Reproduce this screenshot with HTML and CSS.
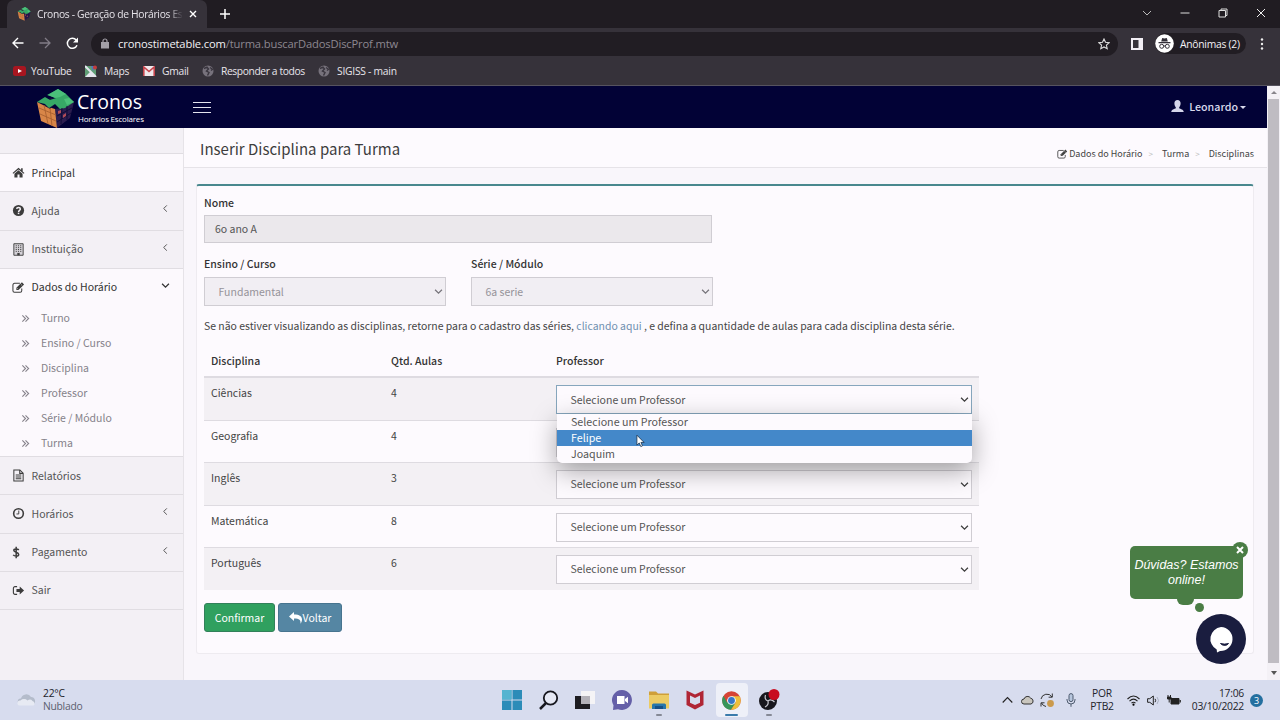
FILE: index.html
```html
<!DOCTYPE html>
<html lang="pt-br">
<head>
    <meta charset="UTF-8">
    <title>Cronos - Geração de Horários Escolares</title>
    <link rel="stylesheet" href="styles.css">
</head>
<body>

<!-- icons used more than once -->
<svg class="defs">
    <symbol id="chevron-down" viewBox="0 0 10 10"><path d="M1.2 3 5 6.800 8.800 3" fill="none" stroke="currentColor" stroke-width="1.4"/></symbol>
    <symbol id="chevron-left" viewBox="0 0 10 10"><path d="M6.5 1.5 3 5 6.5 8.500" fill="none" stroke="currentColor" stroke-width="1.1"/></symbol>
    <symbol id="double-right" viewBox="0 0 10 10"><path d="M1.500 1.500 5 5 1.500 8.500M5 1.500 8.500 5 5 8.500" fill="none" stroke="currentColor" stroke-width="1.200"/></symbol>
    <symbol id="edit" viewBox="0 0 14 12">
        <path d="M10.500 7.200V9.500a1.700 1.700 0 0 1-1.700 1.700H2.700A1.700 1.700 0 0 1 1 9.500V3.200a1.700 1.700 0 0 1 1.700-1.700H8.500" fill="none" stroke="currentColor" stroke-width="1.100"/>
        <path d="M4.700 8.700V6.400L10.700.4 13 2.700 7 8.700z" fill="currentColor"/><path d="m5.600 6.800 1 1M9.600 2.600l1.400 1.300" stroke="#fff" stroke-width=".6"/>
    </symbol>
    <symbol id="globe" viewBox="0 0 12 12"><circle cx="6" cy="6" r="5.500" fill="#77727c"/><path d="M2 3.500 5 2.200 6.500 4 4.500 6l2.500 1.500L5.500 10.500M8 2.500l2.500 1.700L9 5.500" fill="none" stroke="#39353e" stroke-width="1.400"/></symbol>
    <symbol id="cube" viewBox="0 0 38 40">
        <path d="M19 20 25 19 38 13 34 29 21 39z" fill="#2c1d50"/>
        <path d="M1 13 9 17 19 20 21 39 5 32z" fill="#d98648"/>
        <path d="M9 11 16 9 20 14 14 20 9 17z" fill="#17123a"/>
        <path d="M22 0 30 5 38 13 29 19 24 20 19 15 13 19 9 15 1 13 9 8 14 11 20 9 11 6z" fill="#37a866"/>
        <path d="M22 0 30 5 24 8 19 9 12 6zM28 10 33 9 38 13 31 16z" fill="#4bc07a"/>
        <path d="M3 19 20 26M4 25l16 7M8 16l4 19M14 19l2 18" fill="none" stroke="#a9602f" stroke-width=".9"/>
        <path d="m21 27 15-8M21 33l14-9M26 19l-1 16M31 17v14" stroke="#110d38"/><path d="m22 22 3-1v3l-3 1zM27 26l3-2v3l-3 2z" fill="#b04c58"/>
    </symbol>
</svg>

<div class="tabstrip">
    <div class="tab">
        <svg width="14" height="14"><use href="#cube"/></svg>
        <span class="tab-title">Cronos - Geração de Horários Es</span>
        <svg width="8" height="8" viewBox="0 0 8 8"><path d="m1 1 6 6M7 1 1 7" stroke="#fff" stroke-width="1.400"/></svg>
    </div>
    <svg class="new-tab" width="12" height="12" viewBox="0 0 12 12"><path d="M6 1v10M1 6h10" stroke="#fff" stroke-width="1.500"/></svg>
    <div class="window-buttons">
        <svg width="10" height="10" viewBox="0 0 10 10"><path d="M1 3l4 4 4-4" fill="none" stroke="#bbb"/></svg>
        <svg width="10" height="10" viewBox="0 0 10 10"><path d="M.5 5h9" stroke="#ddd"/></svg>
        <svg width="10" height="10" viewBox="0 0 10 10"><path d="M1 2.500h6.500V9H1zM3 2.500V1h6v6.500H7.500" fill="none" stroke="#ddd"/></svg>
        <svg width="10" height="10" viewBox="0 0 10 10"><path d="m1 1 8 8M9 1 1 9" stroke="#eee"/></svg>
    </div>
</div>

<div class="toolbar">
    <div class="nav-buttons">
        <svg width="12" height="12" viewBox="0 0 12 12"><path d="M11.500 6H1.500M6 1 1 6l5 5" fill="none" stroke="#fff" stroke-width="1.400"/></svg>
        <svg width="12" height="12" viewBox="0 0 12 12"><path d="M.5 6h10M6 1l5 5-5 5" fill="none" stroke="#817c86" stroke-width="1.300"/></svg>
        <svg width="13" height="13" viewBox="0 0 13 13"><path d="M11 8.200A5 5 0 1 1 10.300 3.200" fill="none" stroke="#fff" stroke-width="1.500"/><path d="M12 .5v5H7z" fill="#fff"/></svg>
    </div>
    <div class="address">
        <svg width="8" height="11" viewBox="0 0 8 11"><path d="M0 4h8v6.500H0z" fill="#a39fa7"/><path d="M2 4.500V3a2 2 0 0 1 4 0v1.500" fill="none" stroke="#a39fa7" stroke-width="1.200"/></svg>
        <span class="url">cronostimetable.com<span>/turma.buscarDadosDiscProf.mtw</span></span>
        <svg width="12" height="12" viewBox="0 0 12 12"><path d="m6 1 1.500 3.300 3.600.4-2.700 2.400.8 3.600L6 8.900l-3.200 1.800.8-3.600L.9 4.700l3.600-.4z" fill="none" stroke="#ddd" stroke-width="1.100"/></svg>
    </div>
    <svg class="side-panel" width="12" height="12" viewBox="0 0 12 12"><path d="M0 0h12v12H0zM2 2v8h5.500V2z" fill="#f2eff5" fill-rule="evenodd"/></svg>
    <div class="incognito">
        <svg width="19" height="19" viewBox="0 0 19 19"><circle cx="9.500" cy="9.500" r="9.300" fill="#fff"/><path d="m6.200 7.500 1-3.500 2.300.6 2.300-.6 1 3.500zM3.500 8h12v1.200h-12z" fill="#332f38"/><circle cx="6.700" cy="12.300" r="2" fill="none" stroke="#332f38"/><circle cx="12.300" cy="12.300" r="2" fill="none" stroke="#332f38"/><path d="M8.500 12h2" stroke="#332f38"/></svg>
        <span>Anônimas (2)</span>
    </div>
    <svg width="4" height="12" viewBox="0 0 4 12"><g fill="#eee"><circle cx="2" cy="1.500" r="1.200"/><circle cx="2" cy="6" r="1.200"/><circle cx="2" cy="10.500" r="1.200"/></g></svg>
</div>

<div class="bookmarks">
    <span class="bm-youtube"><svg width="13" height="10" viewBox="0 0 13 10"><rect width="13" height="10" rx="2.500" fill="#a81620"/><path d="m5 3 4 2-4 2z" fill="#fff"/></svg>YouTube</span>
    <span class="bm-maps"><svg width="12" height="12" viewBox="0 0 12 12"><path d="M0 1h11v11H0z" fill="#5f9d75"/><path d="m0 12 5.500-5.500L11 12z" fill="#e4e6ee"/><path d="m0 1 11 11" stroke="#e4e6ee" stroke-width="2"/><path d="M6 1h5L8 6z" fill="#5076bd"/><circle cx="10" cy="2.500" r="2" fill="#c23b3b"/></svg>Maps</span>
    <span class="bm-gmail"><svg width="12" height="10" viewBox="0 0 12 10"><path d="M0 0h12v10H0z" fill="#f0e8eb"/><path d="M.8 10V1L6 5.500 11.200 1v9" fill="none" stroke="#c4444c" stroke-width="1.600"/></svg>Gmail</span>
    <span class="bm-reply"><svg width="12" height="12"><use href="#globe"/></svg>Responder a todos</span>
    <span class="bm-sigiss"><svg width="12" height="12"><use href="#globe"/></svg>SIGISS - main</span>
</div>

<div class="viewport">
    <div class="page">
        <header class="navbar">
            <div class="brand">
                <svg width="38" height="40"><use href="#cube"/></svg>
                <div>
                    <div class="brand-name">Cronos</div>
                    <div class="brand-sub">Horários Escolares</div>
                </div>
            </div>
            <div class="burger"><i></i><i></i><i></i></div>
            <div class="user">
                <svg width="13" height="12" viewBox="0 0 13 12"><path d="M6.500 0C8.500 0 9.600 1.300 9.600 3.300c0 1.800-.6 3-1.400 3.900v1c.9.800 4.500 1 4.500 3.800H.3C.3 9.200 3.900 9 4.800 8.200v-1C4 6.300 3.400 5.100 3.400 3.300 3.400 1.300 4.500 0 6.500 0z" fill="#d5d6ea"/></svg>
                <span>Leonardo</span><i class="caret"></i>
            </div>
        </header>

        <div class="columns">
            <nav class="sidebar">
                <ul>
                    <li class="active"><svg class="icon" viewBox="0 0 14 14"><path d="M7 2 .6 7.500l.8.900L7 3.700l5.600 4.700.8-.9L11.500 5.800V2.500H9.800v1.900z"/><path d="M7 4.700 2.600 8.300V12.500h3.300V9.200h2.200v3.300h3.300V8.300z"/></svg>Principal</li>
                    <li><svg class="icon" viewBox="0 0 14 14"><circle cx="7" cy="7" r="6"/><path d="M5 5.300C5.200 3.300 9 3.400 9 5.500 9 6.900 7.100 6.900 7.100 8.500" fill="none" stroke="#f3f0f5" stroke-width="1.600"/><path d="M6.200 9.300h1.700v1.600H6.200z" fill="#f3f0f5"/></svg>Ajuda<svg class="arrow"><use href="#chevron-left"/></svg></li>
                    <li><svg class="icon" viewBox="0 0 14 14"><path d="M2 .8h10v12.400H2z" fill="#d5d2d8" stroke="currentColor"/><path d="M4 3h6M4 5h6M4 7h6M4 9h6" stroke="currentColor" stroke-dasharray="1.200 1.200"/><path d="M5.700 10.700h2.600v2.500H5.700z"/></svg>Instituição<svg class="arrow"><use href="#chevron-left"/></svg></li>
                    <li class="open"><svg class="icon"><use href="#edit"/></svg>Dados do Horário<svg class="arrow"><use href="#chevron-down"/></svg></li>
                    <li class="sub">
                        <ul>
                            <li><svg><use href="#double-right"/></svg>Turno</li>
                            <li><svg><use href="#double-right"/></svg>Ensino / Curso</li>
                            <li><svg><use href="#double-right"/></svg>Disciplina</li>
                            <li><svg><use href="#double-right"/></svg>Professor</li>
                            <li><svg><use href="#double-right"/></svg>Série / Módulo</li>
                            <li><svg><use href="#double-right"/></svg>Turma</li>
                        </ul>
                    </li>
                    <li><svg class="icon" viewBox="0 0 14 14"><path d="M2 1h6.500L12 4.500V13H2zM8.300 1v3.700H12M4 6.500h6M4 8.500h6M4 10.500h6" fill="none" stroke="currentColor" stroke-width="1.100"/></svg>Relatórios</li>
                    <li><svg class="icon" viewBox="0 0 14 14"><circle cx="7" cy="7" r="5.200" fill="none" stroke="currentColor" stroke-width="1.700"/><path d="M7.300 3.800v3.700H4.800" fill="none" stroke="currentColor"/></svg>Horários<svg class="arrow"><use href="#chevron-left"/></svg></li>
                    <li><svg class="icon" viewBox="0 0 14 14"><path d="M7.300 4.300C6.400 2.900 1.900 2.600 1.900 4.700 1.900 7.100 7.200 6.500 7.200 9.100 7.200 11.500 2.500 11.200 1.300 9.600M4.500.8v12.400" fill="none" stroke="currentColor" stroke-width="1.600"/></svg>Pagamento<svg class="arrow"><use href="#chevron-left"/></svg></li>
                    <li><svg class="icon" viewBox="0 0 14 14"><path d="M5.500 2.800H3.200A1.700 1.700 0 0 0 1.500 4.500v5A1.700 1.700 0 0 0 3.200 11.200h2.300" fill="none" stroke="currentColor" stroke-width="1.200"/><path d="M4.800 5.300h3.500V2.600L13 7l-4.700 4.400V8.700H4.800z"/></svg>Sair</li>
                </ul>
            </nav>

            <main>
                <div class="content-header">
                    <h1>Inserir Disciplina para Turma</h1>
                    <ol class="breadcrumb">
                        <li><svg width="11" height="10"><use href="#edit"/></svg>Dados do Horário</li>
                        <li>Turma</li>
                        <li>Disciplinas</li>
                    </ol>
                </div>

                <div class="box">
                    <div class="form-group">
                        <label>Nome</label>
                        <div class="form-control readonly">6o ano A</div>
                    </div>
                    <div class="form-row">
                        <div class="form-group">
                            <label>Ensino / Curso</label>
                            <div class="form-control select disabled">Fundamental<svg><use href="#chevron-down"/></svg></div>
                        </div>
                        <div class="form-group">
                            <label>Série / Módulo</label>
                            <div class="form-control select disabled">6a serie<svg><use href="#chevron-down"/></svg></div>
                        </div>
                    </div>
                    <p class="hint">Se não estiver visualizando as disciplinas, retorne para o cadastro das séries, <a>clicando aqui</a> , e defina a quantidade de aulas para cada disciplina desta série.</p>

                    <table>
                        <thead>
                            <tr><th class="col-disc">Disciplina</th><th class="col-qtd">Qtd. Aulas</th><th>Professor</th></tr>
                        </thead>
                        <tbody>
                            <tr>
                                <td>Ciências</td><td>4</td>
                                <td>
                                    <div class="form-control select focus">Selecione um Professor<svg><use href="#chevron-down"/></svg>
                                        <div class="options">
                                            <div>Selecione um Professor</div>
                                            <div class="hover">Felipe</div>
                                            <div>Joaquim</div>
                                            <svg class="cursor" viewBox="0 0 10 15"><path d="M1 1v11l2.600-2.300 1.700 4 1.900-.8-1.700-3.800H9z" fill="#fff" stroke="#1b3550" stroke-width=".9"/></svg>
                                        </div>
                                    </div>
                                </td>
                            </tr>
                            <tr><td>Geografia</td><td>4</td><td><div class="form-control select"></div></td></tr>
                            <tr><td>Inglês</td><td>3</td><td><div class="form-control select">Selecione um Professor<svg><use href="#chevron-down"/></svg></div></td></tr>
                            <tr><td>Matemática</td><td>8</td><td><div class="form-control select">Selecione um Professor<svg><use href="#chevron-down"/></svg></div></td></tr>
                            <tr><td>Português</td><td>6</td><td><div class="form-control select">Selecione um Professor<svg><use href="#chevron-down"/></svg></div></td></tr>
                        </tbody>
                    </table>

                    <div class="buttons">
                        <button class="btn btn-success">Confirmar</button>
                        <button class="btn btn-back"><svg width="13" height="12" viewBox="0 0 13 12"><path d="M0 4.500 5 0v2.600c5.500 0 8 2 8 5 0 1.500-.6 2.900-1.500 4.200C12 8.400 10.500 6.600 5 6.600V9z" fill="#fff"/></svg>Voltar</button>
                    </div>
                </div>
            </main>
        </div>
    </div>
    <div class="scrollbar"><i class="up"></i><div class="thumb"></div><i class="down"></i></div>

    <div class="chat">
        <div class="chat-bubble">Dúvidas? Estamos online!
            <svg class="chat-close" viewBox="0 0 16 16"><circle cx="8" cy="8" r="8" fill="#4a7d45"/><path d="m5 5 6 6M11 5l-6 6" stroke="#fff" stroke-width="2"/></svg>
        </div>
        <svg class="chat-button" viewBox="0 0 50 50"><circle cx="25" cy="25" r="25" fill="#1a1d3f"/><path d="M25 13a12 12 0 1 1-1 24l-3 1.500-.3-3A12 12 0 0 1 25 13z" fill="#fff"/><path d="M24.500 29.500c2 2.500 6.500 2.500 8 0q-4 1.200-8 0z" fill="#1a1d3f" stroke="#1a1d3f"/></svg>
    </div>
</div>

<div class="taskbar">
    <div class="weather">
        <svg width="20" height="14" viewBox="0 0 20 14"><path d="M3.500 11.500a3 3 0 0 1 .5-6 5.500 5.500 0 0 1 10-1.500 4 4 0 0 1 2 7.500z" fill="#b4bccb"/><path d="M2.500 12.500a2.500 2.500 0 0 1 1-5 5 5 0 0 1 7 0q3-2 5 .5a2.500 2.500 0 0 1 1 4.500z" fill="#e7eaf3"/></svg>
        <div><div>22°C</div><div class="muted">Nublado</div></div>
    </div>
    <div class="apps">
        <div><svg width="20" height="20" viewBox="0 0 20 20"><path d="M0 0h9.500v9.500H0zM10.500 0H20v9.500h-9.500zM0 10.500h9.500V20H0zM10.500 10.500H20V20h-9.500z" fill="#2c8cb8"/><path d="M0 0h9.500v9.500H0z" fill="#55b4d0"/></svg></div>
        <div><svg width="20" height="20" viewBox="0 0 20 20"><circle cx="11.500" cy="8" r="6.700" fill="#e6e9f5" stroke="#17181f" stroke-width="1.800"/><path d="m7 13-6 6" stroke="#17181f" stroke-width="2.500"/></svg></div>
        <div><svg width="20" height="20" viewBox="0 0 20 20"><path d="M6 1h14v13H6z" fill="#f5f4f6"/><path d="M0 6h15v13H0z" fill="#1d1c21"/><path d="M6 6h9v8H6z" fill="#b3b1b8"/></svg></div>
        <div><svg width="20" height="20" viewBox="0 0 20 20"><path d="M10 0a10 10 0 1 1-4 19.200L1 20l.5-4.800A10 10 0 0 1 10 0z" fill="#6560a8"/><path d="M5 6h7.500v8H5zM13 9l3-2.200v6.400L13 11z" fill="#fff"/></svg></div>
        <div class="running"><svg width="22" height="20" viewBox="0 0 22 20"><path d="M1 1.500h7l2 2h11V18H1z" fill="#cf9f39"/><path d="M1 5h20v13.500H1z" fill="#eccb64"/><path d="M4 19v-4q0-1.500 1.500-1.500h11q1.500 0 1.500 1.500v4z" fill="#2776ac"/><path d="M7 16h8v3H7z" fill="#164f87"/></svg></div>
        <div><svg width="20" height="20" viewBox="0 0 20 20"><path d="m1.500.5 8.500 4 8.500-4v14.500L10 19.500 1.500 15zM5 5.500v7.200l5 2.400 5-2.400V5.500L10 8z" fill="#b02635" fill-rule="evenodd"/></svg></div>
        <div class="running current"><svg width="19" height="19" viewBox="0 0 20 20"><circle cx="10" cy="10" r="9.800" fill="#d64436"/><path d="M1.500 5A9.800 9.800 0 0 0 9.500 19.800L14.500 12 10 10 5.500 12z" fill="#37955a"/><path d="M9.500 19.800A9.800 9.800 0 0 0 18.600 5.500H10L14.500 12z" fill="#edc03c"/><circle cx="10" cy="10" r="4.600" fill="#fff"/><circle cx="10" cy="10" r="3.600" fill="#3878c8"/></svg></div>
        <div class="running"><svg width="22" height="22" viewBox="0 0 22 22"><circle cx="10" cy="12" r="9" fill="#18171d"/><g fill="none" stroke="#c9c9d1" stroke-width="1.200"><path d="M7.500 6Q6 10.500 10 12M16.500 13Q13 9.500 10 12M7 18q4-2 3-6"/></g><circle cx="16" cy="5.500" r="5.500" fill="#c80d20"/></svg></div>
    </div>
    <div class="tray">
        <svg width="11" height="8" viewBox="0 0 11 8"><path d="m.7 6.500 4.800-5 4.800 5" fill="none" stroke="#222" stroke-width="1.100"/></svg>
        <svg class="tray-cloud" width="13" height="10" viewBox="0 0 13 10"><path d="M3 9a2.400 2.400 0 0 1 0-5 3.700 3.700 0 0 1 6.700-.8A3 3 0 0 1 10 9z" fill="#c9c6be" stroke="#333"/></svg>
        <svg class="tray-sync" width="15" height="15" viewBox="0 0 15 15"><path d="M1 6a6 6 0 0 1 11-2M12.300.5V4.200H8.600M6 13.500A6 6 0 0 1 1.500 10M1 13.500V9.800h3.500" fill="none" stroke="#333"/><circle cx="10.500" cy="10.500" r="3.400" fill="#cb9a4c"/></svg>
        <svg class="tray-mic" width="10" height="14" viewBox="0 0 10 14"><rect x="3" y=".6" width="4" height="8" rx="2" fill="#b7c6dd" stroke="#4d5a6e"/><path d="M1 6v1a4 4 0 0 0 8 0V6M5 11v2.800" fill="none" stroke="#4d5a6e"/></svg>
        <div class="lang">POR<br>PTB2</div>
        <svg class="tray-wifi" width="13" height="11" viewBox="0 0 13 11"><path d="M.5 4q6-6 12 0M2.500 6.200q4-4 8 0M4.500 8.200q2-2 4 0" fill="none" stroke="#222" stroke-width="1.100"/><circle cx="6.500" cy="9.700" r="1.100"/></svg>
        <svg class="tray-sound" width="13" height="11" viewBox="0 0 13 11"><path d="M.6 3.700h2.200L6.300 1v9L2.800 7.300H.6z" fill="none" stroke="#222"/><path d="M8 3.800q1.300 1.700 0 3.400" fill="none" stroke="#222"/><path d="M10 2q3 3.500 0 7" fill="none" stroke="#aab0c0"/></svg>
        <svg class="tray-battery" width="14" height="11" viewBox="0 0 14 11"><path d="M4 3.500h8v5.500H4z" fill="#222" stroke="#222"/><path d="M13.200 5v2.500" stroke="#222" stroke-width="1.300"/><path d="M1 0v2M3.500 0v2M.5 2h3.500v2H.5zM2.200 4v3.500" stroke="#222" fill="#222"/></svg>
        <div class="clock">17:06<br>03/10/2022</div>
        <span class="notif">3</span>
    </div>
</div>
</body>
</html>
```

FILE: styles.css
```css
* {
    box-sizing: border-box;
}
body {
    margin: 0;
    width: 1280px;
    height: 720px;
    overflow: hidden;
    display: flex;
    flex-direction: column;
    font-family: "Noto Sans CJK SC", sans-serif;
    font-size: 10.500px;
    line-height: 16px;
    color: #444;
    background: #f9f6fb;
}
svg {
    display: block;
    flex: none;
}
.defs {
    position: absolute;
    width: 0;
    height: 0;
}
ul, ol {
    list-style: none;
    margin: 0;
    padding: 0;
}

/* browser chrome */
.tabstrip, .toolbar, .bookmarks, .taskbar {
    font-family: "Open Sans", sans-serif;
    font-size: 10.300px;
    letter-spacing: -0.250px;
    display: flex;
    align-items: center;
}
.tabstrip {
    height: 28px;
    background: #201c22;
    color: #e5e2e8;
}
.tab {
    display: flex;
    align-items: center;
    width: 200px;
    height: 28px;
    margin-left: 7px;
    padding-left: 10px;
    border-radius: 7px 7px 0 0;
    background: #36323a;
}
.tab-title {
    width: 146px;
    margin: 0 6px 0 6px;
    white-space: nowrap;
    letter-spacing: -0.320px;
    -webkit-mask-image: linear-gradient(to right, #000 90%, transparent);
}
.new-tab {
    margin-left: 12px;
}
.window-buttons {
    display: flex;
    gap: 28px;
    margin-left: auto;
    margin-right: 14px;
    margin-top: -3px;
}
.toolbar {
    height: 31px;
    background: #36323a;
    padding-right: 16px;
}
.nav-buttons {
    display: flex;
    gap: 15px;
    width: 91px;
    padding-left: 12px;
}
.address {
    flex: 1;
    height: 24px;
    margin-right: 13px;
    padding: 0 8px 0 10px;
    border-radius: 12px;
    background: #211d23;
    display: flex;
    align-items: center;
}
.url {
    flex: 1;
    margin-left: 9px;
    font-size: 11.200px;
    letter-spacing: -0.150px;
    color: #f3f1f5;
}
.url span {
    color: #8d8891;
}
.incognito {
    display: flex;
    align-items: center;
    gap: 6px;
    width: 91px;
    height: 21px;
    margin: 0 14px 0 12px;
    border-radius: 11px;
    background: #211d23;
    color: #f3f1f5;
    white-space: nowrap;
}
.bookmarks {
    height: 27px;
    padding-bottom: 3px;
    background: #36323a;
    border-bottom: 1px solid #56535f;
    color: #e8e5eb;
}
.bookmarks span {
    display: flex;
    align-items: center;
    white-space: nowrap;
}
.bm-youtube { margin-left: 13px; width: 72px; gap: 5px; }
.bm-maps { width: 58px; gap: 7px; }
.bm-gmail { width: 59px; gap: 7px; }
.bm-reply { width: 116px; gap: 7px; letter-spacing: -0.400px; }
.bm-sigiss { gap: 7px; }

/* page */
.viewport {
    position: relative;
    display: flex;
    height: 594px;
}
.page {
    width: 1267px;
    display: flex;
    flex-direction: column;
}
.navbar {
    height: 42px;
    background: #020236;
    display: flex;
    align-items: center;
    color: #fff;
}
.brand {
    display: flex;
    align-items: center;
    gap: 3px;
    width: 193px;
    padding: 3px 0 0 36px;
    font-family: "Open Sans", sans-serif;
}
.brand-name {
    font-size: 19.500px;
    line-height: 20px;
    margin-top: -2px;
}
.brand-sub {
    margin: 1px 0 0 1px;
    font-size: 8px;
    line-height: 11px;
    letter-spacing: -0.200px;
    white-space: nowrap;
}
.burger {
    width: 18px;
    display: flex;
    flex-direction: column;
    gap: 4px;
}
.burger i {
    height: 1px;
    background: #e4e4ef;
}
.user {
    display: flex;
    align-items: center;
    margin-left: auto;
    margin-right: 21px;
    color: #d9daec;
    font-size: 10.700px;
    font-weight: 500;
}
.user svg {
    margin-top: -3px;
}
.user span {
    margin-left: 5px;
}
.caret {
    margin-left: 2px;
    border: 3px solid transparent;
    border-top-color: #d9daec;
    border-bottom: 0;
}
.columns {
    flex: 1;
    display: flex;
}
.sidebar {
    width: 184px;
    padding-top: 25px;
    background: #f3f0f5;
    border-right: 1px solid #e6e3e8;
    color: #555;
}
.sidebar > ul > li {
    display: flex;
    align-items: center;
    height: 38.250px;
    padding-left: 12px;
    border-top: 1px solid #e0dde2;
}
.sidebar > ul > li.active, .sidebar > ul > li.open {
    background: #fcf9fd;
    color: #333;
}
.sidebar > ul > li.sub {
    display: block;
    height: 150px;
    padding: 0;
    border-top: 0;
    background: #fcf9fd;
}
.sidebar > ul > li:last-child {
    height: 39px;
    border-bottom: 1px solid #e0dde2;
}
.icon {
    width: 13px;
    height: 13px;
    margin-right: 6.500px;
    fill: currentColor;
    color: #3c3c3c;
}
.arrow {
    width: 9px;
    height: 9px;
    margin: -4px 13.500px 0 auto;
}
.sub li {
    display: flex;
    align-items: center;
    height: 25px;
    padding: 0 0 1px 21px;
    color: #85828a;
}
.sub svg {
    width: 9px;
    height: 9px;
    margin-right: 11px;
}
main {
    flex: 1;
    background: #f9f6fb;
}
.content-header {
    height: 40px;
    display: flex;
    align-items: center;
    justify-content: space-between;
    padding: 3px 13px 0 16px;
    background: #fdfafe;
    border-bottom: 1px solid #e6e3e8;
}
h1 {
    margin: 0;
    font-size: 15px;
    font-weight: 400;
    color: #3d3d3d;
}
.breadcrumb {
    display: flex;
    padding-top: 9px;
    font-size: 9px;
}
.breadcrumb li {
    display: flex;
    align-items: center;
    gap: 1px;
}
.breadcrumb li + li::before {
    content: ">";
    margin: 0 8px 0 6px;
    font-size: 8px;
    color: #bbb;
}
.box {
    width: 1058px;
    height: 470px;
    margin: 16px 0 0 12px;
    padding: 8px 7px;
    background: #fdfafe;
    border: 1px solid #eeebf0;
    border-top: 2px solid #49888e;
    border-radius: 3px;
}
.form-group label {
    display: block;
    margin-bottom: 4px;
    line-height: 17px;
    font-weight: 500;
    color: #333;
}
.form-control {
    position: relative;
    display: flex;
    align-items: center;
    justify-content: space-between;
    height: 29px;
    border: 1px solid #d0cdd3;
    background: #fdfafe;
    color: #555;
    padding: 0 10px;
}
.form-control.readonly {
    width: 508px;
    height: 28px;
    background: #ebe8ec;
}
.select {
    padding: 0 2.500px 0 13.500px;
}
.select > svg {
    width: 9px;
    height: 9px;
    color: #3d3d3d;
}
.select.disabled {
    background: #f1eef3;
    color: #96939a;
}
.disabled > svg {
    color: #77747b;
}
.select.focus {
    border-color: #86a6bd;
}
.form-row {
    display: flex;
    gap: 25px;
    margin-top: 12px;
}
.form-row .form-group {
    width: 242px;
}
.form-row label {
    margin-bottom: 5px;
}
.hint {
    margin: 11px 0 19px;
    font-size: 10.450px;
    line-height: 17px;
}
.hint a {
    color: #7090b0;
}
table {
    width: 775px;
    border-collapse: collapse;
    table-layout: fixed;
}
th {
    height: 23px;
    padding: 0 7px 7px;
    text-align: left;
    font-weight: 500;
    color: #333;
    border-bottom: 2px solid #dedbe1;
}
.col-disc { width: 180px; }
.col-qtd { width: 165px; }
td {
    height: 43px;
    padding: 7px 7px 4px;
    vertical-align: top;
    border-top: 1px solid #dedbe1;
}
tbody tr:nth-child(2) td, tbody tr:nth-child(4) td {
    height: 42px;
}
tbody tr:nth-child(odd) {
    background: #f3f0f4;
}
.options {
    position: absolute;
    z-index: 2;
    top: 28px;
    left: 0;
    width: 415px;
    padding: 0 0 1px;
    border-radius: 0 0 5px 5px;
    background: #fdfafe;
    box-shadow: 0 8px 26px rgba(0, 0, 0, 0.350);
    font-size: 10.700px;
}
.options div {
    height: 16px;
    padding-left: 14px;
}
.options .hover {
    background: #4488c9;
    color: #fff;
}
.cursor {
    position: absolute;
    left: 79px;
    top: 20px;
    width: 9px;
    height: 14px;
}
.buttons {
    display: flex;
    gap: 3px;
    margin-top: 13px;
}
.btn {
    display: flex;
    align-items: center;
    justify-content: center;
    height: 29px;
    padding: 0;
    border-radius: 3px;
    font: inherit;
    color: #fff;
}
.btn-success {
    width: 71px;
    background: #30a05f;
    border: 1px solid #32805a;
}
.btn-back {
    width: 64px;
    gap: 1px;
    background: #5586a3;
    border: 1px solid #47748f;
}
.scrollbar {
    width: 13px;
    display: flex;
    flex-direction: column;
    align-items: center;
    background: #f4f1f6;
}
.scrollbar i {
    border: 3px solid transparent;
}
.up {
    margin: 5px 0;
    border-top: 0 !important;
    border-bottom: 3px solid #88858b !important;
}
.down {
    margin: 8px 0 5px;
    border-bottom: 0 !important;
    border-top: 4px solid #555 !important;
}
.thumb {
    flex: 1;
    width: 11px;
    background: #bfbcc2;
}

/* chat widget floats over the page */
.chat {
    position: absolute;
    right: 32px;
    bottom: 15px;
    width: 118px;
    height: 120px;
}
.chat-bubble {
    position: relative;
    width: 113px;
    height: 53px;
    margin-top: 1px;
    padding-top: 12px;
    border-radius: 5px;
    background: #4a7d45;
    color: #fff;
    font: italic 12.500px/15px "Liberation Sans", sans-serif;
    text-align: center;
}
.chat-bubble::before {
    content: "";
    position: absolute;
    left: 47px;
    top: 53px;
    width: 17px;
    height: 6px;
    border-radius: 0 0 9px 9px;
    background: #4a7d45;
}
.chat-bubble::after {
    content: "";
    position: absolute;
    left: 65px;
    top: 57px;
    width: 9px;
    height: 9px;
    border-radius: 50%;
    background: #4a7d45;
}
.chat-close {
    position: absolute;
    right: -5px;
    top: -4px;
    width: 16px;
    height: 16px;
}
.chat-button {
    position: absolute;
    right: 2px;
    bottom: 1px;
    width: 50px;
    height: 50px;
}

/* windows taskbar */
.taskbar {
    height: 40px;
    background: #d7dcee;
    color: #22232b;
    line-height: 13px;
}
.weather {
    display: flex;
    align-items: center;
    gap: 6px;
    width: 493.500px;
    padding-left: 17px;
}
.muted {
    color: #5c606e;
}
.apps {
    display: flex;
    align-items: center;
}
.apps > div {
    position: relative;
    width: 36.700px;
    height: 34px;
    display: flex;
    align-items: center;
    justify-content: center;
}
.apps .current {
    width: 32px;
    margin: 0 2.300px;
    border-radius: 4px;
    background: #eef0f8;
}
.running::after {
    content: "";
    position: absolute;
    bottom: 1px;
    left: 16px;
    width: 6px;
    height: 2px;
    border-radius: 1px;
    background: #858995;
}
.current::after {
    left: 9px;
    width: 13px;
    background: #3a7bab;
}
.tray {
    display: flex;
    align-items: center;
    margin-left: auto;
    margin-right: 17px;
}
.tray-cloud { margin-left: 8px; }
.tray-sync { margin-left: 6px; }
.tray-mic { margin-left: 11px; }
.lang { width: 26px; margin-left: 13px; text-align: center; }
.tray-wifi { margin-left: 12px; }
.tray-sound { margin-left: 7px; }
.tray-battery { margin-left: 7px; }
.clock { width: 60px; margin-left: 3px; text-align: right; }
.notif {
    width: 13px;
    height: 13px;
    margin-left: 6px;
    border-radius: 50%;
    background: #246f9f;
    color: #fff;
    font-size: 9px;
    text-align: center;
}
```
